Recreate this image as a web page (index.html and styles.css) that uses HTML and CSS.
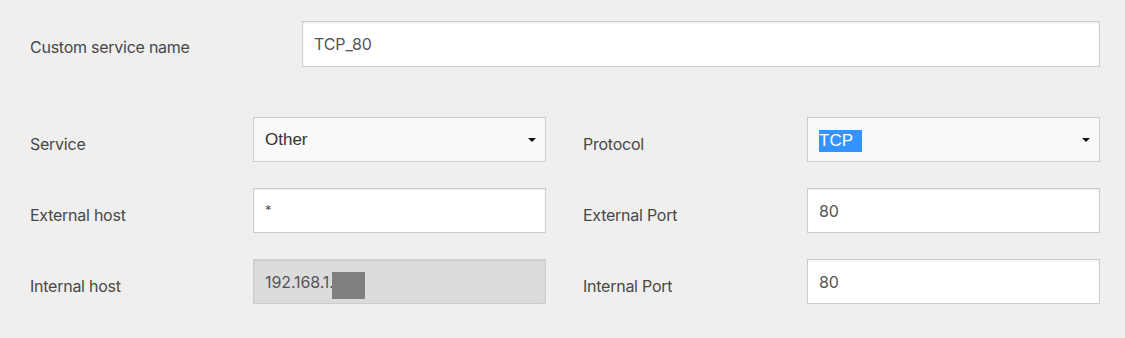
FILE: index.html
```html
<!DOCTYPE html>
<html lang="en">
<head>
    <meta charset="UTF-8">
    <title>Port forwarding</title>
    <link rel="stylesheet" href="styles.css">
</head>
<body>
<div class="form">
    <!-- Name row -->
    <div class="row row-name">
        <label class="label">Custom service name</label>
        <div class="field"><span class="value">TCP_80</span></div>
    </div>

    <!-- Service / protocol rows -->
    <div class="pairs">
        <div class="row">
            <label class="label">Service</label>
            <div class="field select"><span class="value plain">Other</span><span class="caret"></span></div>
            <label class="label label-right">Protocol</label>
            <div class="field select"><span class="value plain picked">TCP </span><span class="caret"></span></div>
        </div>
        <div class="row">
            <label class="label">External host</label>
            <div class="field"><span class="value star">*</span></div>
            <label class="label label-right">External Port</label>
            <div class="field"><span class="value">80</span></div>
        </div>
        <div class="row">
            <label class="label">Internal host</label>
            <div class="field disabled"><span class="value">192.168.1.</span><span class="masked"></span></div>
            <label class="label label-right">Internal Port</label>
            <div class="field"><span class="value">80</span></div>
        </div>
    </div>
</div>
</body>
</html>
```

FILE: styles.css
```css
body {
    margin: 0;
    background: #efefef;
    font-family: 'Inter', 'Liberation Sans', sans-serif;
}

.form {
    padding: 21px 25px 0 30px;
}

.row {
    display: grid;
    grid-template-columns: 223px 293px 261px 293px;
    align-items: center;
}

.row-name {
    grid-template-columns: 272px 798px;
    height: 46px;
}

.pairs {
    margin-top: 50px;
    display: flex;
    flex-direction: column;
    gap: 26px;
}

.pairs .row {
    height: 45px;
}

.label {
    font-size: 16px;
    letter-spacing: -0.25px;
    color: #484848;
    padding-top: 6px;
}

.pairs .label {
    padding-top: 9px;
}

.label-right {
    padding-left: 37px;
}

/* Input boxes */
.field {
    box-sizing: border-box;
    height: 100%;
    background: #fff;
    border: 1px solid #cccccc;
    box-shadow: inset 0 1px 2px rgba(0, 0, 0, 0.07);
    display: flex;
    align-items: center;
    padding: 0 11px;
    position: relative;
}

.value {
    font-size: 16px;
    letter-spacing: -0.1px;
    color: #555;
}

.value.plain {
    font-family: 'Liberation Sans', Arial, sans-serif;
    font-size: 17px;
    letter-spacing: 0;
    color: #333;
}

.value.star {
    font-size: 13px;
    margin-top: -2px;
}

.select {
    background: #f9f9f9;
    box-shadow: none;
}

.picked {
    background: #3393ff;
    color: #fff !important;
    padding: 1px 0 1px 0;
    width: 43px;
    margin-top: 2px;
}

.caret {
    position: absolute;
    right: 9px;
    top: 50%;
    margin-top: -2px;
    border-left: 4px solid transparent;
    border-right: 4px solid transparent;
    border-top: 4px solid #111;
}

.disabled {
    background: #dcdcdc;
}

.masked {
    display: inline-block;
    width: 33px;
    height: 27px;
    background: #808080;
    margin-top: 8px;
    margin-left: -2px;
}
```
